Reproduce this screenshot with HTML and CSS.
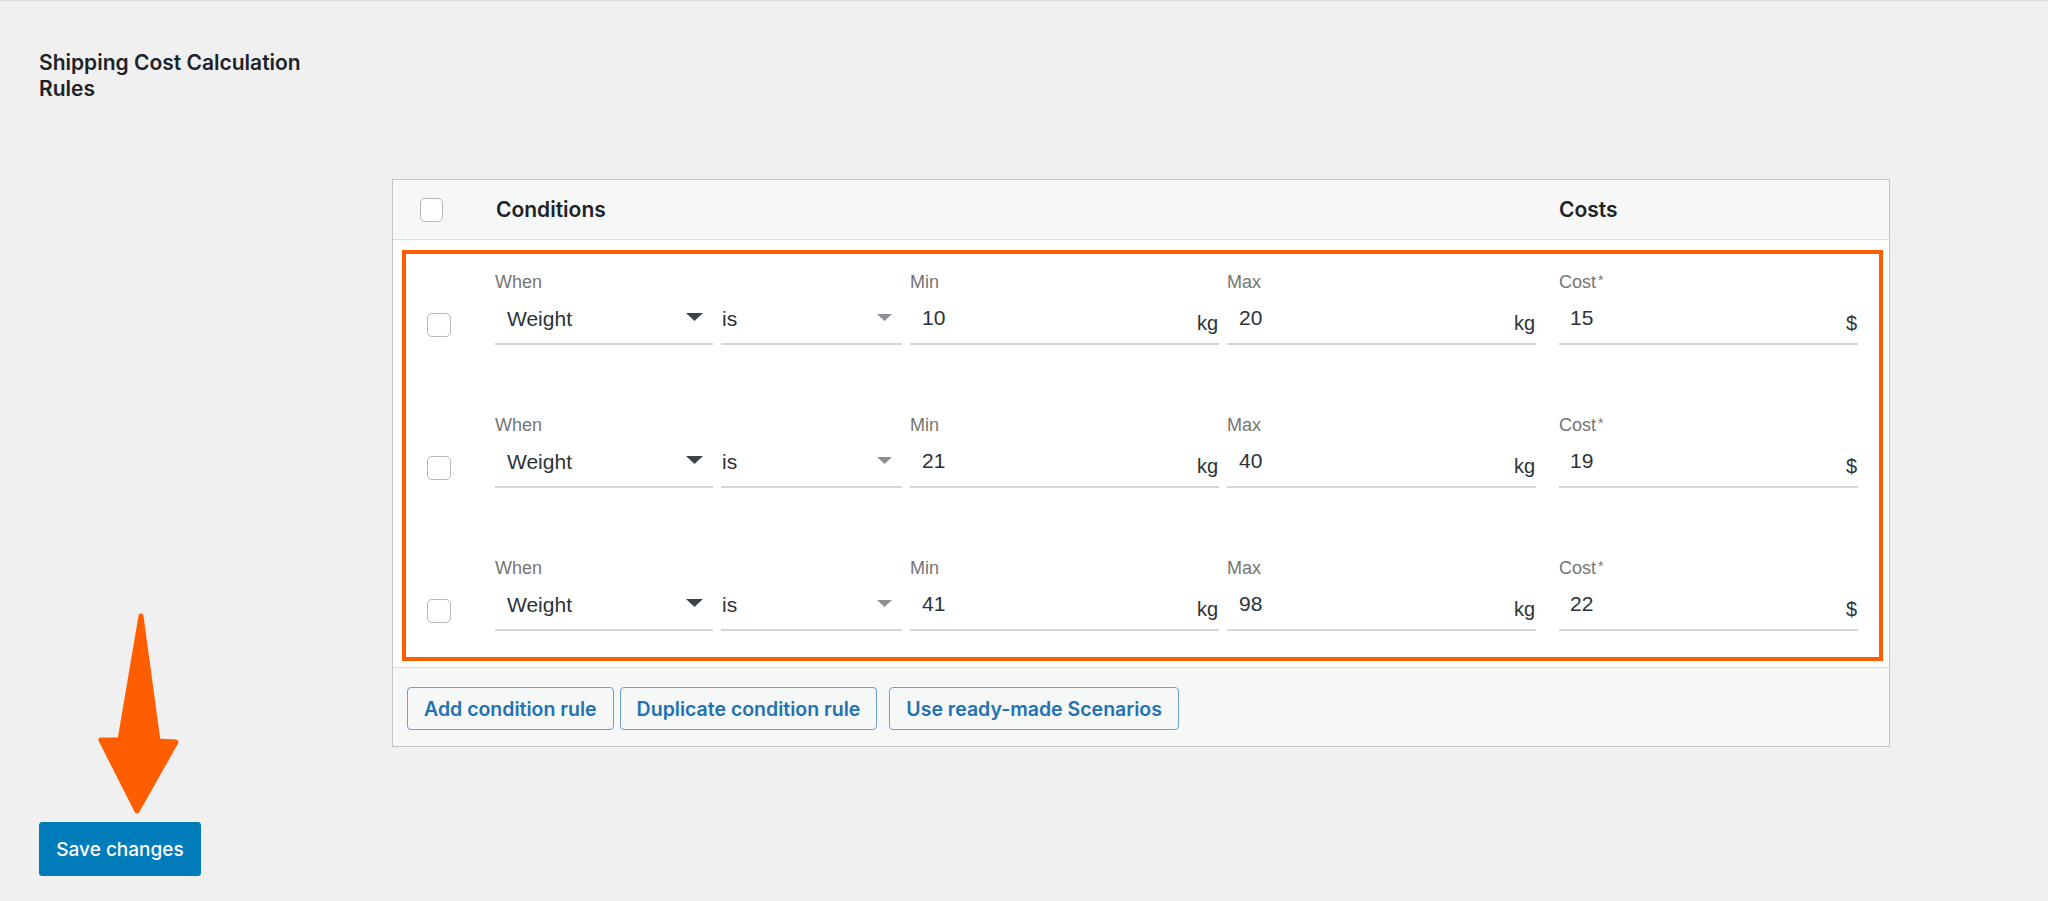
FILE: index.html
```html
<!DOCTYPE html>
<html lang="en">
<head>
    <meta charset="UTF-8">
    <meta name="viewport" content="width=device-width, initial-scale=1.0">
    <title>Shipping Cost Calculation Rules</title>
    <link rel="stylesheet" href="styles.css">
</head>
<body>
    <div class="wrap">
        <h2 class="section-title">Shipping Cost Calculation Rules</h2>

        <div class="rules-table">
            <div class="rules-head">
                <input type="checkbox" class="check head-check">
                <span class="head-conditions">Conditions</span>
                <span class="head-costs">Costs</span>
            </div>

            <div class="rules-body">
                <div class="highlight">
                    <div class="rule-row">
                        <input type="checkbox" class="check row-check">
                        <div class="fields">
                            <div class="field f-when">
                                <label>When</label>
                                <div class="control">
                                    <select class="pick pick-when"><option>Weight</option></select>
                                    <svg class="caret" width="17" height="8" viewBox="0 0 17 8"><path d="M0 0h17L8.5 8z"/></svg>
                                </div>
                            </div>
                            <div class="field f-is">
                                <label>&nbsp;</label>
                                <div class="control">
                                    <select class="pick pick-is"><option>is</option></select>
                                    <svg class="caret light" width="15" height="7" viewBox="0 0 15 7"><path d="M0 0h15L7.5 7z"/></svg>
                                </div>
                            </div>
                            <div class="field f-num">
                                <label>Min</label>
                                <div class="control">
                                    <input class="num" type="text" value="10">
                                    <span class="unit">kg</span>
                                </div>
                            </div>
                            <div class="field f-num">
                                <label>Max</label>
                                <div class="control">
                                    <input class="num" type="text" value="20">
                                    <span class="unit">kg</span>
                                </div>
                            </div>
                            <div class="field f-cost">
                                <label>Cost<span class="req">*</span></label>
                                <div class="control">
                                    <input class="num" type="text" value="15">
                                    <span class="unit">$</span>
                                </div>
                            </div>
                        </div>
                    </div>

                    <div class="rule-row">
                        <input type="checkbox" class="check row-check">
                        <div class="fields">
                            <div class="field f-when">
                                <label>When</label>
                                <div class="control">
                                    <select class="pick pick-when"><option>Weight</option></select>
                                    <svg class="caret" width="17" height="8" viewBox="0 0 17 8"><path d="M0 0h17L8.5 8z"/></svg>
                                </div>
                            </div>
                            <div class="field f-is">
                                <label>&nbsp;</label>
                                <div class="control">
                                    <select class="pick pick-is"><option>is</option></select>
                                    <svg class="caret light" width="15" height="7" viewBox="0 0 15 7"><path d="M0 0h15L7.5 7z"/></svg>
                                </div>
                            </div>
                            <div class="field f-num">
                                <label>Min</label>
                                <div class="control">
                                    <input class="num" type="text" value="21">
                                    <span class="unit">kg</span>
                                </div>
                            </div>
                            <div class="field f-num">
                                <label>Max</label>
                                <div class="control">
                                    <input class="num" type="text" value="40">
                                    <span class="unit">kg</span>
                                </div>
                            </div>
                            <div class="field f-cost">
                                <label>Cost<span class="req">*</span></label>
                                <div class="control">
                                    <input class="num" type="text" value="19">
                                    <span class="unit">$</span>
                                </div>
                            </div>
                        </div>
                    </div>

                    <div class="rule-row">
                        <input type="checkbox" class="check row-check">
                        <div class="fields">
                            <div class="field f-when">
                                <label>When</label>
                                <div class="control">
                                    <select class="pick pick-when"><option>Weight</option></select>
                                    <svg class="caret" width="17" height="8" viewBox="0 0 17 8"><path d="M0 0h17L8.5 8z"/></svg>
                                </div>
                            </div>
                            <div class="field f-is">
                                <label>&nbsp;</label>
                                <div class="control">
                                    <select class="pick pick-is"><option>is</option></select>
                                    <svg class="caret light" width="15" height="7" viewBox="0 0 15 7"><path d="M0 0h15L7.5 7z"/></svg>
                                </div>
                            </div>
                            <div class="field f-num">
                                <label>Min</label>
                                <div class="control">
                                    <input class="num" type="text" value="41">
                                    <span class="unit">kg</span>
                                </div>
                            </div>
                            <div class="field f-num">
                                <label>Max</label>
                                <div class="control">
                                    <input class="num" type="text" value="98">
                                    <span class="unit">kg</span>
                                </div>
                            </div>
                            <div class="field f-cost">
                                <label>Cost<span class="req">*</span></label>
                                <div class="control">
                                    <input class="num" type="text" value="22">
                                    <span class="unit">$</span>
                                </div>
                            </div>
                        </div>
                    </div>
                </div>
            </div>

            <div class="rules-foot">
                <button class="button-secondary">Add condition rule</button>
                <button class="button-secondary">Duplicate condition rule</button>
                <button class="button-secondary btn-scenarios">Use ready-made Scenarios</button>
            </div>
        </div>

        <button class="button-primary">Save changes</button>
    </div>

    <!-- pointer towards the save button -->
    <svg class="pointer" width="90" height="210" viewBox="0 0 90 210">
        <polygon points="46,6 63,131 81,132 42,201 6,130 25,130" />
    </svg>
</body>
</html>
```

FILE: styles.css
```css
* {
    box-sizing: border-box;
}
body {
    margin: 0;
    background: #f0f0f1;
    border-top: 1px solid #dcdcde;
    font-family: 'Inter', 'Noto Sans', sans-serif;
    color: #1d2327;
    position: relative;
}
.wrap {
    padding: 49px 0 0 39px;
}
.section-title {
    margin: 0;
    width: 300px;
    font-size: 21px;
    line-height: 26px;
    font-weight: 600;
}

/* rules table */
.rules-table {
    margin: 77px 0 0 353px;
    width: 1498px;
    border: 1px solid #c3c4c7;
    background: #fff;
}
.rules-head {
    display: flex;
    align-items: center;
    height: 60px;
    padding-left: 27px;
    background: #f6f7f7;
    border-bottom: 1px solid #dcdcde;
    font-size: 21px;
    font-weight: 600;
}
.check {
    appearance: none;
    -webkit-appearance: none;
    margin: 0;
    width: 24px;
    height: 24px;
    border: 1px solid #b4b9be;
    border-radius: 5px;
    background: #fff;
}
.head-check {
    width: 23px;
    margin-right: 53px;
}
.head-conditions {
    width: 1063px;
}

.rules-body {
    padding: 10px 6px 6px 9px;
}
.highlight {
    border: 4px solid #ff5e00;
    padding: 16px 0 26px 21px;
    display: flex;
    flex-direction: column;
    gap: 68px;
}
.rule-row {
    display: flex;
    align-items: flex-end;
}
.row-check {
    margin: 0 44px 8px 0;
}
.fields {
    display: flex;
    gap: 8px;
}
.field {
    display: flex;
    flex-direction: column;
}
.field label {
    display: block;
    height: 23px;
    font-family: 'Liberation Sans', Arial, sans-serif;
    font-size: 18px;
    line-height: 24px;
    color: #757575;
}
.req {
    position: relative;
    top: -3px;
    margin-left: 2px;
    font-size: 14px;
    line-height: 1;
}
.f-when { width: 218px; }
.f-is { width: 181px; }
.f-num { width: 309px; }
.f-cost { width: 299px; margin-left: 15px; }

.control {
    display: flex;
    align-items: center;
    height: 52px;
    border-bottom: 2px solid #d6d6d6;
    font-family: 'Liberation Sans', Arial, sans-serif;
    font-size: 21px;
    color: #2c3338;
}
.pick, .num {
    flex: 1;
    min-width: 0;
    height: 100%;
    border: none;
    outline: none;
    background: transparent;
    font: inherit;
    color: inherit;
    appearance: none;
    -webkit-appearance: none;
}
.pick-when { padding-left: 12px; }
.pick-is { padding-left: 1px; }
.num { padding: 0 0 0 12px; }
.f-cost .num { padding-left: 11px; }
.caret {
    margin: 0 10px 2px 0;
    fill: #3c434a;
}
.caret.light {
    fill: #8c8f94;
}
.unit {
    padding: 10px 1px 0 0;
    font-size: 20px;
}

.rules-foot {
    display: flex;
    gap: 6px;
    padding: 19px 14px 16px;
    background: #f6f7f7;
    border-top: 1px solid #dcdcde;
}
.button-secondary {
    height: 43px;
    padding: 0 16px;
    background: #f6f7f7;
    border: 1px solid #6d9fd0;
    border-radius: 4px;
    color: #2271b1;
    font-family: 'Inter', 'Noto Sans', sans-serif;
    font-size: 19.5px;
    font-weight: 600;
}
.btn-scenarios {
    margin-left: 6px;
}
.button-primary {
    display: block;
    margin-top: 75px;
    width: 162px;
    height: 54px;
    background: #007cba;
    border: 1px solid #007cba;
    border-radius: 3px;
    color: #fff;
    font-family: 'Inter', 'Noto Sans', sans-serif;
    font-size: 19px;
    font-weight: 500;
}

.pointer {
    position: absolute;
    left: 95px;
    top: 609px;
}
.pointer polygon {
    fill: #ff5e00;
    stroke: #ff5e00;
    stroke-width: 5;
    stroke-linejoin: round;
}
```
